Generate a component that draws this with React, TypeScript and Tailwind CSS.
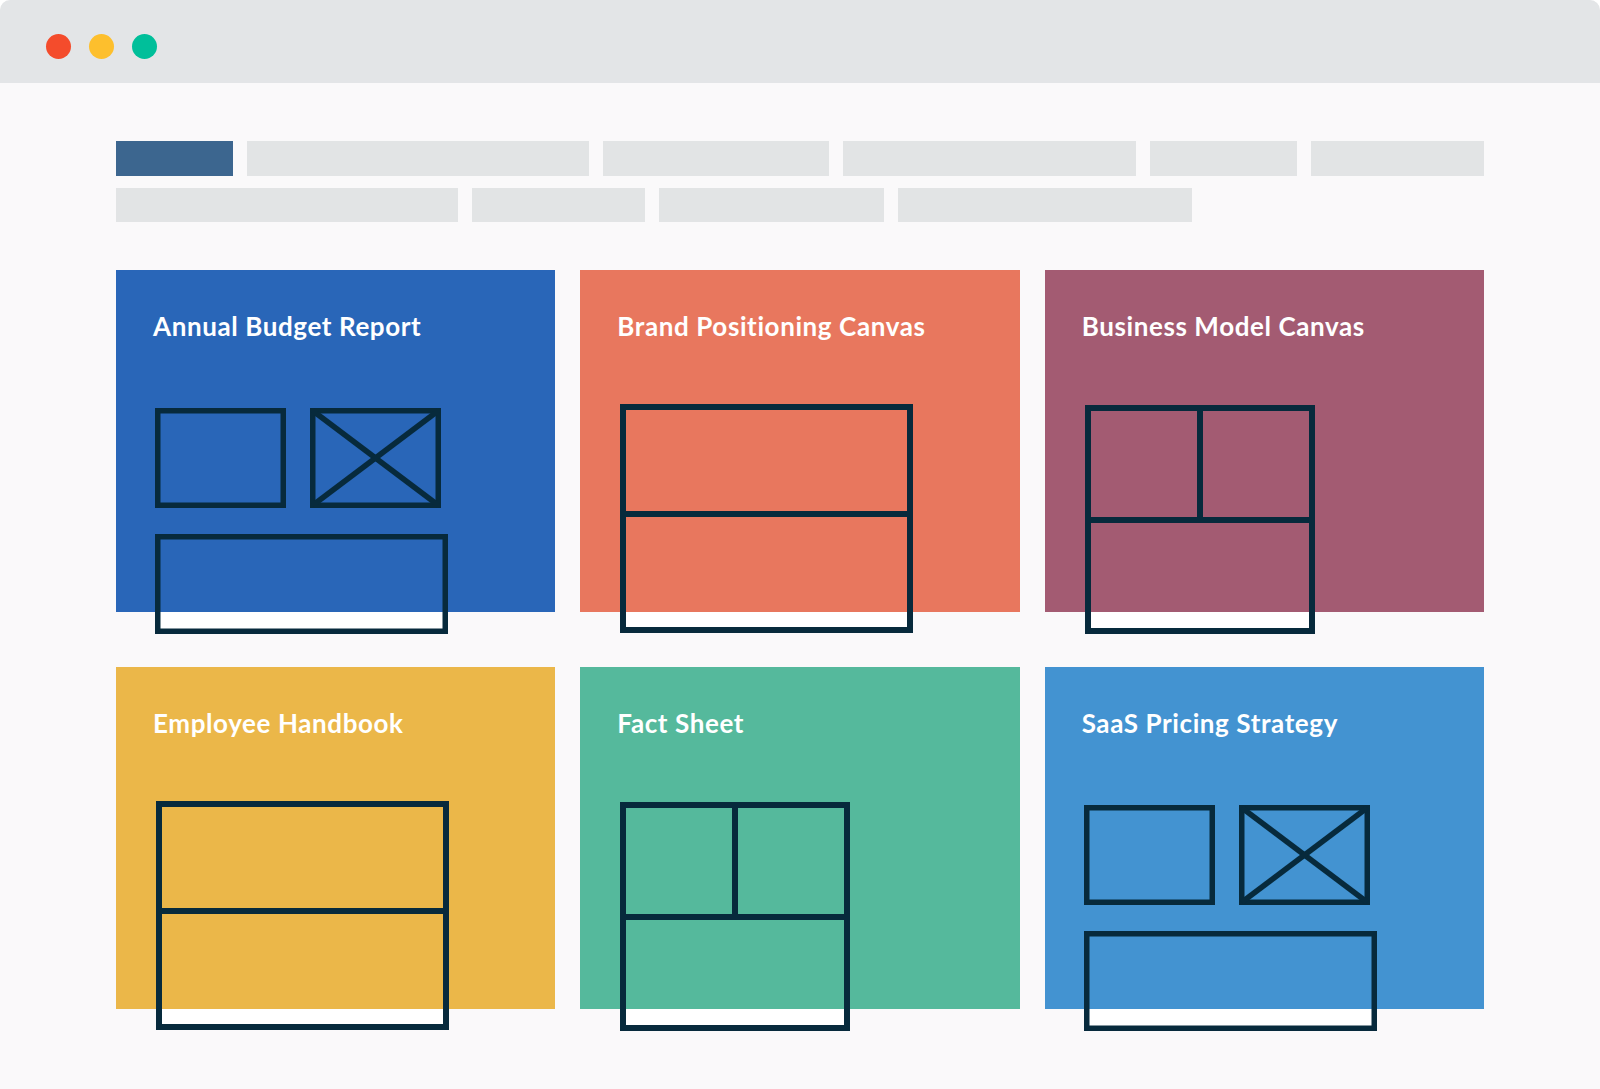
import React from "react";

type Kind = "xgrid" | "hsplit" | "quad";

const STROKE = "#072a3c";

function Wire({ kind }: { kind: Kind }) {
  if (kind === "xgrid") {
    return (
      <svg width="300" height="240" viewBox="0 0 300 240" className="block overflow-visible">
        <rect x="5.75" y="212" width="288" height="20" fill="#ffffff" />
        <rect x="5.75" y="10.75" width="125.5" height="94.5" fill="none" stroke={STROKE} strokeWidth="5.5" />
        <rect x="160.75" y="10.75" width="125.5" height="94.5" fill="none" stroke={STROKE} strokeWidth="5.5" />
        <line x1="160.75" y1="10.75" x2="286.25" y2="105.25" stroke={STROKE} strokeWidth="5.5" />
        <line x1="286.25" y1="10.75" x2="160.75" y2="105.25" stroke={STROKE} strokeWidth="5.5" />
        <rect x="5.75" y="136.75" width="287.5" height="94.5" fill="none" stroke={STROKE} strokeWidth="5.5" />
      </svg>
    );
  }
  if (kind === "hsplit") {
    return (
      <svg width="300" height="240" viewBox="0 0 300 240" className="block overflow-visible">
        <rect x="7" y="212" width="287" height="18" fill="#ffffff" />
        <rect x="7" y="7" width="287" height="223" fill="none" stroke={STROKE} strokeWidth="6" />
        <line x1="4" y1="114" x2="297" y2="114" stroke={STROKE} strokeWidth="6" />
      </svg>
    );
  }
  return (
    <svg width="300" height="240" viewBox="0 0 300 240" className="block overflow-visible">
      <rect x="7" y="212" width="224" height="19" fill="#ffffff" />
      <rect x="7" y="8" width="224" height="223" fill="none" stroke={STROKE} strokeWidth="6" />
      <line x1="4" y1="120" x2="234" y2="120" stroke={STROKE} strokeWidth="6" />
      <line x1="119" y1="5" x2="119" y2="120" stroke={STROKE} strokeWidth="6" />
    </svg>
  );
}

const cards: { title: string; bg: string; kind: Kind }[] = [
  { title: "Annual Budget Report", bg: "bg-[#2966b8]", kind: "xgrid" },
  { title: "Brand Positioning Canvas", bg: "bg-[#e8775e]", kind: "hsplit" },
  { title: "Business Model Canvas", bg: "bg-[#a35b72]", kind: "quad" },
  { title: "Employee Handbook", bg: "bg-[#ebb749]", kind: "hsplit" },
  { title: "Fact Sheet", bg: "bg-[#55b99c]", kind: "quad" },
  { title: "SaaS Pricing Strategy", bg: "bg-[#4393d1]", kind: "xgrid" },
];

function Card({ title, bg, kind }: { title: string; bg: string; kind: Kind }) {
  return (
    <div className={`${bg} h-[342px] flex flex-col`}>
      <div className="h-[130px] shrink-0 pl-[37px] pt-[43px]">
        <div
          className="text-white font-bold text-[26px] leading-[26px] tracking-[0.6px] whitespace-nowrap"
          style={{ fontFamily: "Lato, 'Open Sans', sans-serif" }}
        >
          {title}
        </div>
      </div>
      <div className="pl-[36px] shrink-0 h-[240px]">
        <Wire kind={kind} />
      </div>
    </div>
  );
}

const row1 = ["w-[117px] bg-[#3c668f]", "w-[342px] bg-[#e2e4e5]", "w-[226px] bg-[#e2e4e5]", "w-[293px] bg-[#e2e4e5]", "w-[147px] bg-[#e2e4e5]", "w-[173px] bg-[#e2e4e5]"];
const row2 = ["w-[342px]", "w-[173px]", "w-[225px]", "w-[294px]"];

export default function App() {
  return (
    <div className="w-[1600px] h-[1089px] bg-white">
      <div className="h-full rounded-t-[10px] overflow-hidden bg-[#faf9fa] flex flex-col">
        <div className="h-[83px] shrink-0 bg-[#e3e5e7] flex items-start gap-[18px] pl-[46px] pt-[34px]">
          <div className="w-[25px] h-[25px] rounded-full bg-[#f44c2c]" />
          <div className="w-[25px] h-[25px] rounded-full bg-[#fdbf2d]" />
          <div className="w-[25px] h-[25px] rounded-full bg-[#00bf9a]" />
        </div>
        <div className="px-[116px] pt-[58px]">
          <div className="flex flex-col gap-[12px]">
            <div className="flex gap-[14px]">
              {row1.map((c, i) => (
                <div key={i} className={`${c} h-[35px]`} />
              ))}
            </div>
            <div className="flex gap-[14px]">
              {row2.map((c, i) => (
                <div key={i} className={`${c} h-[34px] bg-[#e2e4e5]`} />
              ))}
            </div>
          </div>
          <div className="mt-[48px] grid grid-cols-3 gap-x-[25px] gap-y-[55px]">
            {cards.map((c) => (
              <Card key={c.title} {...c} />
            ))}
          </div>
        </div>
      </div>
    </div>
  );
}
